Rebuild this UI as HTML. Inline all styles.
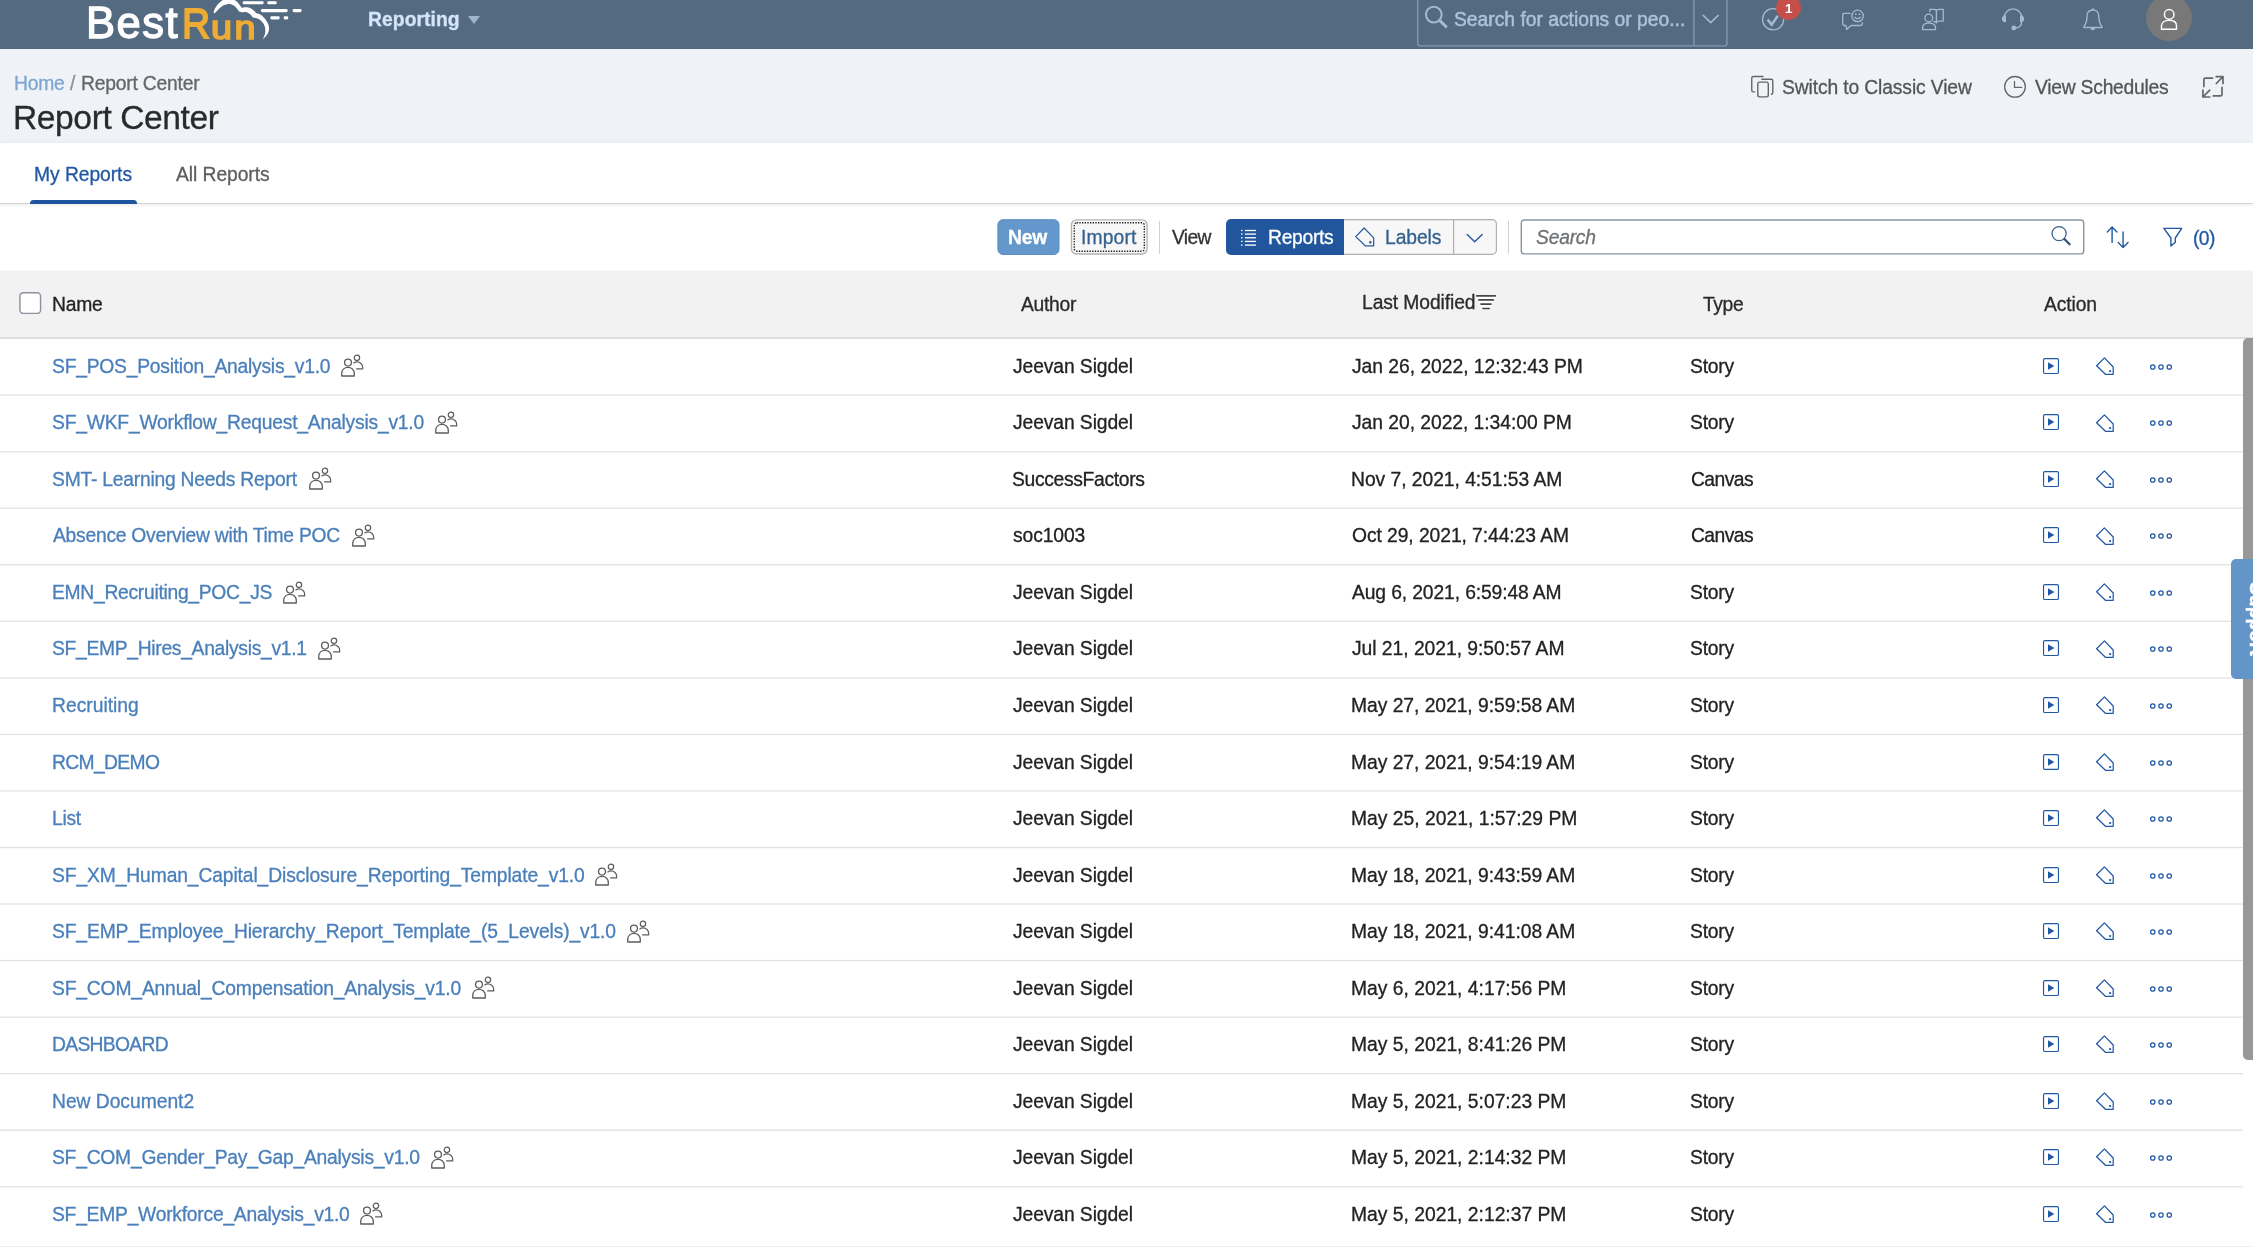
<!DOCTYPE html>
<html lang="en"><head><meta charset="utf-8"><title>Report Center</title>
<style>
*{box-sizing:border-box}
html,body{margin:0;padding:0}
body{width:2253px;height:1247px;overflow:hidden;position:relative;background:#fff;font-family:'Liberation Sans',sans-serif;font-size:19.3px;color:#222}
header,section,nav,div,aside,a,h1,span,button,i{position:absolute;display:block}
.t{white-space:pre;line-height:1;will-change:transform;-webkit-text-stroke:.3px currentColor}
.ico{position:absolute;overflow:visible;display:block}
a{text-decoration:none}
button{margin:0;padding:0;font:inherit;border:0;background:none}
h1{margin:0;font-weight:400;font-size:inherit}
.shell{background:linear-gradient(to bottom,#536a80 0 49px,#8495a6 49px 50px);overflow:hidden}
.badge{border-radius:50%;background:#c5504a}
.avatar{border-radius:50%;background:#787878}
.pagehead{background:#eff3f8}
.tabs{background:#fff;box-shadow:inset 0 -1px 0 #d3d3d3,0 1px 4px rgba(0,0,0,.09)}
.ul{background:#1f559e;border-radius:3.5px 3.5px 0 0}
.btn{border-radius:5px}
.sep{background:#d0d0d0}
.rep{background:#22569c;border-radius:5px 0 0 5px}
.lab{background:#f7f7f7;box-shadow:inset 0 1.2px 0 #b0b0b0,inset 0 -1.2px 0 #b0b0b0}
.chev{background:#f7f7f7;box-shadow:inset 0 0 0 1.2px #b0b0b0;border-radius:0 5px 5px 0}
.search{}
.theadtop{background:#fafafa}
.thead{background:#f2f2f2;border-bottom:2.2px solid #dedede}
.bottomline{background:#edf1f6}
.scroll{background:#989898;border-radius:5px 0 0 5px}
.support{background:#6495c9;border-radius:5px 0 0 5px;overflow:hidden}
.rot{transform-origin:0 0;transform:rotate(90deg)}
</style></head>
<body>
<header class="shell" style="left:0.00px;top:0.00px;width:2253.00px;height:50.00px;">
<a class="logo" style="left:80.00px;top:0.00px;width:230.00px;height:49.00px;">
<span id="t0" class="t" style="left:5.85px;top:2.00px;font-size:43.6px;color:#fff;letter-spacing:1.461px;-webkit-text-stroke:1.3px #fff;">Best</span><span id="t1" class="t run" style="left:101.51px;top:2.00px;font-size:43.4px;color:#eeac34;transform-origin:0 0;transform:scaleX(0.8963);-webkit-text-stroke:1.9px #eeac34;">R</span><span id="t2" class="t run" style="left:131.18px;top:12.00px;font-size:32.6px;color:#eeac34;letter-spacing:2.192px;transform-origin:0 0;transform:scaleX(1.1600);-webkit-text-stroke:1.6px #eeac34;">un</span>
<svg class="ico" style="left:125.0px;top:-8.0px" width="100" height="52" viewBox="0 0 100 52"><path d="M8.60 21.20 C8.78 20.52 9.00 18.57 9.70 17.10 C10.40 15.63 11.67 13.75 12.80 12.40 C13.93 11.05 15.30 9.97 16.50 9.00 C17.70 8.03 18.82 7.13 20.00 6.60 C21.18 6.07 22.43 5.77 23.60 5.80 C24.77 5.83 26.05 6.43 27.00 6.80 C27.95 7.17 28.42 7.47 29.30 8.00 C30.18 8.53 31.35 9.10 32.30 10.00 C33.25 10.90 34.22 12.42 35.00 13.40 C35.78 14.38 36.67 15.48 37.00 15.90 C37.50 15.78 38.93 15.25 40.00 15.20 C41.07 15.15 42.27 15.28 43.40 15.60 C44.53 15.92 45.73 16.43 46.80 17.10 C47.87 17.77 49.07 18.90 49.80 19.60 C50.53 20.30 50.97 21.02 51.20 21.30 C51.70 21.43 53.13 21.62 54.20 22.10 C55.27 22.58 56.48 23.23 57.60 24.20 C58.72 25.17 59.95 26.55 60.90 27.90 C61.85 29.25 62.77 30.85 63.30 32.30 C63.83 33.75 64.10 35.27 64.10 36.60 C64.10 37.93 63.77 39.12 63.30 40.30 C62.83 41.48 62.25 42.50 61.30 43.70 C60.35 44.90 58.22 46.87 57.60 47.50 C57.93 46.75 59.15 44.37 59.60 43.00 C60.05 41.63 60.25 40.65 60.30 39.30 C60.35 37.95 60.25 36.25 59.90 34.90 C59.55 33.55 58.93 32.32 58.20 31.20 C57.47 30.08 56.57 29.03 55.50 28.20 C54.43 27.37 53.08 26.65 51.80 26.20 C50.52 25.75 48.47 25.62 47.80 25.50 C47.52 25.12 46.83 23.95 46.10 23.20 C45.37 22.45 44.42 21.53 43.40 21.00 C42.38 20.47 41.18 20.12 40.00 20.00 C38.82 19.88 37.30 20.37 36.30 20.30 C35.30 20.23 34.38 19.72 34.00 19.60 C33.72 19.18 32.98 18.00 32.30 17.10 C31.62 16.20 30.85 14.98 29.90 14.20 C28.95 13.42 27.72 12.78 26.60 12.40 C25.48 12.02 24.43 11.78 23.20 11.90 C21.97 12.02 20.43 12.55 19.20 13.10 C17.97 13.65 16.93 14.32 15.80 15.20 C14.67 16.08 13.42 17.42 12.40 18.40 C11.38 19.38 10.33 20.63 9.70 21.10 C9.07 21.57 8.78 21.18 8.60 21.20 Z" fill="#fff"/><g fill="#fff"><rect x="37.70" y="9.30" width="20.90" height="2.9" rx="1.25"/><rect x="62.30" y="9.30" width="9.40" height="2.9" rx="1.25"/><rect x="55.90" y="16.95" width="26.80" height="3.3" rx="1.45"/><rect x="87.60" y="16.95" width="9.00" height="3.3" rx="1.45"/><rect x="65.30" y="24.35" width="9.40" height="3.1" rx="1.35"/><rect x="78.60" y="24.35" width="4.70" height="3.1" rx="1.35"/></g></svg>
</a>
<nav class="menu" style="left:360.00px;top:0.00px;width:130.00px;height:49.00px;">
<span id="t3" class="t" style="left:8.20px;top:10.00px;font-weight:700;color:#d3e5f8;letter-spacing:0.067px;">Reporting</span>
<svg class="ico" style="left:107.0px;top:15.0px" width="14" height="10" viewBox="0 0 14 10"><path d="M1 1 L13 1 L7 9 Z" fill="#9fb5cb"/></svg>
</nav>
<div class="hsearch" style="left:1417.00px;top:0.00px;width:311.00px;height:48.00px;">
<svg class="ico" style="left:-2.0px;top:0.0px" width="316" height="50" viewBox="0 0 316 50"><path d="M2.7 -2 L2.7 43.2 Q2.7 45.9 5.4 45.9 L309.3 45.9 Q312 45.9 312 43.2 L312 -2 M278.9 -2 L278.9 45.9" fill="none" stroke="#7f9ab4" stroke-width="1.4"/></svg>
<svg class="ico" style="left:6.0px;top:4.0px" width="26" height="26" viewBox="0 0 26 26"><circle cx="10.8" cy="10.6" r="7.85" fill="none" stroke="#a3bad2" stroke-width="2.05"/><path d="M16.6 16.4 L22.9 22.5" stroke="#a3bad2" stroke-width="3.1" stroke-linecap="round"/></svg>
<span id="t4" class="t" style="left:37.10px;top:10.00px;color:#aac2d9;letter-spacing:-0.009px;-webkit-text-stroke:.5px #aac2d9;">Search for actions or peo...</span>
<svg class="ico" style="left:283.0px;top:12.0px" width="22" height="14" viewBox="0 0 22 14"><path d="M3.2 3.4 L10.7 10.6 L18.2 3.4" fill="none" stroke="#a3bad2" stroke-width="1.5" stroke-linecap="round" stroke-linejoin="round"/></svg>
</div>
<svg class="ico" style="left:1760.0px;top:6.0px" width="27" height="27" viewBox="0 0 27 27"><circle cx="13.1" cy="13.3" r="10.6" fill="none" stroke="#a3bad2" stroke-width="1.3"/><path d="M7.6 13.6 L11.7 18.6 L17.8 9.8" fill="none" stroke="#a3bad2" stroke-width="2.5" stroke-linejoin="miter"/></svg>
<span class="badge" style="left:1775.70px;top:-4.70px;width:25.00px;height:25.00px;">
<span id="t5" class="t" style="left:9.30px;top:6.70px;font-size:13.4px;font-weight:700;color:#fff;-webkit-text-stroke:0;">1</span>
</span>
<svg class="ico" style="left:1840.0px;top:6.0px" width="27" height="27" viewBox="0 0 27 27"><g fill="none" stroke="#a3bad2" stroke-width="1.3" stroke-linecap="round" stroke-linejoin="round"><path d="M10.2 7.3 L4.4 7.3 Q2.7 7.3 2.7 9 L2.7 17.8 Q2.7 19.5 4.4 19.5 L6 19.5 L6.6 23.4 L10.8 19.5 L20.6 19.5 Q22.3 19.5 22.3 17.8 L22.3 16.6"/><circle cx="17.6" cy="9.9" r="5.7"/><path d="M14.9 11.2 Q17.6 14 20.3 11.2"/></g><circle cx="15.7" cy="8.2" r="0.9" fill="#a3bad2"/><circle cx="19.5" cy="8.2" r="0.9" fill="#a3bad2"/></svg>
<svg class="ico" style="left:1920.0px;top:6.0px" width="27" height="27" viewBox="0 0 27 27"><g fill="none" stroke="#a3bad2" stroke-width="1.3" stroke-linejoin="round" stroke-linecap="round"><circle cx="8.8" cy="11.9" r="3.85"/><path d="M2.6 23.6 L2.6 21.6 C2.6 18.6 5.3 17.1 8.8 17.1 C12.3 17.1 15.5 18.6 15.5 21.6 L15.5 23.6 Z"/><path d="M9.9 5.6 L9.9 3.3 L14.2 3.3 Q16.4 3.3 16.4 5.5 L16.4 15.2 M16.4 5.5 Q16.4 3.3 18.6 3.3 L23.2 3.3 L23.2 15.2 L19 15.2 Q16.4 15.2 16.4 17 Q15.4 15.4 13.6 15.3"/></g></svg>
<svg class="ico" style="left:2000.0px;top:6.0px" width="27" height="27" viewBox="0 0 27 27"><g fill="none" stroke="#a3bad2" stroke-width="1.3" stroke-linecap="round"><path d="M4 12.5 A9 9.6 0 0 1 22 12.5"/><path d="M21.6 16 C21.6 19.5 19 21.6 15.6 22"/></g><path d="M6 9.4 L6 16.2 L4.6 16.2 Q1.9 15.6 1.9 12.8 Q1.9 10 4.6 9.4 Z" fill="#a3bad2"/><path d="M20 9.4 L20 16.2 L21.4 16.2 Q24.2 15.6 24.2 12.8 Q24.2 10 21.4 9.4 Z" fill="#a3bad2"/><circle cx="13.8" cy="22" r="2.4" fill="#a3bad2"/></svg>
<svg class="ico" style="left:2080.0px;top:6.0px" width="27" height="27" viewBox="0 0 27 27"><g fill="none" stroke="#a3bad2" stroke-width="1.3" stroke-linejoin="round"><path d="M12.9 4 C8.8 4 7 7 7 10.4 C7 15 6.2 17.6 3.8 20.6 Q3.4 21.5 4.3 21.5 L21.5 21.5 Q22.4 21.5 22 20.6 C19.6 17.6 18.8 15 18.8 10.4 C18.8 7 17 4 12.9 4 Z"/></g><circle cx="12.9" cy="3.3" r="1" fill="#a3bad2"/><path d="M10.6 22 A2.3 2.3 0 0 0 15.2 22 Z" fill="#a3bad2"/></svg>
<span class="avatar" style="left:2145.50px;top:-5.50px;width:46.80px;height:46.80px;">
<svg class="ico" style="left:9.5px;top:11.5px" width="28" height="27" viewBox="0 0 28 27"><g fill="none" stroke="#fff" stroke-width="1.45" stroke-linejoin="round"><circle cx="14.2" cy="8.4" r="4.8"/><path d="M6.5 23.3 L6.5 19.8 C6.5 16.3 10 14.3 14.2 14.3 C18.4 14.3 21.5 16.3 21.5 19.8 L21.5 23.3 Z"/></g></svg>
</span>
</header>
<section class="pagehead" style="left:0.00px;top:49.00px;width:2253.00px;height:94.00px;">
<nav class="crumbs" style="left:0.00px;top:21.00px;width:400.00px;height:26.00px;">
<span id="t6" class="t" style="left:13.60px;top:4.00px;color:#7ea6d0;letter-spacing:-0.236px;">Home</span>
<span id="t7" class="t" style="left:70.30px;top:4.00px;color:#8a8f96;">/</span>
<span id="t8" class="t" style="left:80.80px;top:4.00px;color:#666;letter-spacing:-0.207px;">Report Center</span>
</nav>
<h1 class="title" style="left:0.00px;top:49.00px;width:400.00px;height:40.00px;">
<span id="t9" class="t" style="left:13.20px;top:3.00px;font-size:33.6px;color:#2a2a2a;letter-spacing:-0.410px;">Report Center</span>
</h1>
<div class="actions" style="left:1740.00px;top:21.00px;width:500.00px;height:34.00px;">
<svg class="ico" style="left:9.0px;top:4.0px" width="27" height="27" viewBox="0 0 27 27"><g fill="none" stroke="#666" stroke-width="1.4" stroke-linecap="round" stroke-linejoin="round"><path d="M14 2.5 L4.4 2.5 Q2.75 2.5 2.75 4.2 L2.75 16.2 Q2.75 17.9 4.4 17.9 L5.6 17.9"/><path d="M12.8 5.3 L22.1 5.3 Q23.8 5.3 23.8 7 L23.8 18.6 Q23.8 20.1 22.4 20.2"/><rect x="8.8" y="8.1" width="10.5" height="14.8" rx="1.8"/></g></svg>
<span id="t10" class="t" style="left:41.50px;top:8.00px;color:#555;letter-spacing:-0.128px;">Switch to Classic View</span>
<svg class="ico" style="left:262.0px;top:4.0px" width="27" height="27" viewBox="0 0 27 27"><g fill="none" stroke="#666" stroke-width="1.3" stroke-linecap="round" stroke-linejoin="round"><circle cx="13" cy="12.85" r="10.35"/><path d="M12.5 7.4 L12.5 13.4 L19.7 13.4"/></g></svg>
<span id="t11" class="t" style="left:295.20px;top:8.00px;color:#555;letter-spacing:-0.239px;">View Schedules</span>
<svg class="ico" style="left:460.0px;top:4.0px" width="27" height="27" viewBox="0 0 27 27"><g fill="none" stroke="#666" stroke-width="1.7" stroke-linecap="round" stroke-linejoin="round"><path d="M12.6 4.1 L5.4 4.1 Q3.9 4.1 3.9 5.6 L3.9 12.6"/><path d="M16.2 2.7 L23 2.7 L23 9.6 M23 2.7 L16.3 9.5"/><path d="M22 13.3 L22 20.4 Q22 21.9 20.5 21.9 L13.3 21.9"/><path d="M2.9 16 L2.9 23 L9.8 23 M2.9 23 L9.7 16.1"/></g></svg>
</div>
</section>
<nav class="tabs" style="left:0.00px;top:143.00px;width:2253.00px;height:61.00px;">
<a class="tab sel" style="left:30.40px;top:0.00px;width:106.20px;height:61.40px;">
<span id="t12" class="t" style="left:3.80px;top:22.00px;color:#2257a3;letter-spacing:-0.059px;">My Reports</span>
<i class="ul" style="left:0.00px;top:57.00px;width:106.60px;height:4.00px;"></i>
</a>
<a class="tab" style="left:170.00px;top:0.00px;width:106.00px;height:61.40px;">
<span id="t13" class="t" style="left:6.40px;top:22.00px;color:#5f5f5f;letter-spacing:-0.066px;">All Reports</span>
</a>
</nav>
<div class="toolbar" style="left:0.00px;top:205.00px;width:2253.00px;height:65.40px;">
<button class="btn new" style="left:997.00px;top:14.00px;width:63.00px;height:36.00px;">
<svg class="ico bx" style="left:-1.00px;top:-1.00px" width="66" height="39" viewBox="0 0 66 39"><rect x="1.90" y="1.70" width="61.10" height="34.80" rx="5" fill="#6497cb" stroke="#5a8ec7" stroke-width="1.0"/></svg>
<span id="t14" class="t" style="left:10.90px;top:9.00px;font-weight:700;color:#fff;letter-spacing:-0.224px;">New</span>
</button>
<button class="btn imp" style="left:1070.00px;top:14.00px;width:78.00px;height:36.00px;">
<svg class="ico bx" style="left:-1.00px;top:-1.00px" width="80" height="39" viewBox="0 0 80 39"><rect x="2.47" y="1.87" width="75.55" height="34.15" rx="5" fill="#f7f7f7" stroke="#b2b2b2" stroke-width="1.35"/></svg>
<svg class="ico" style="left:0.0px;top:0.0px" width="80" height="38" viewBox="0 0 80 38"><rect x="4.26" y="3.76" width="70.07" height="28.47" rx="2.4" fill="none" stroke="#1c1c1c" stroke-width="1.33" stroke-dasharray="1.33 1.34"/></svg>
<span id="t15" class="t" style="left:11.40px;top:9.00px;color:#35628f;letter-spacing:0.143px;">Import</span>
</button>
<i class="sep" style="left:1159.00px;top:16.00px;width:1.20px;height:32.50px;"></i>
<span id="t16" class="t" style="left:1171.90px;top:23.00px;color:#333;letter-spacing:-0.673px;">View</span>
<div class="seg" style="left:1226.40px;top:14.20px;width:270.20px;height:35.80px;">
<button class="sg rep" style="left:0.00px;top:0.00px;width:117.40px;height:35.80px;">
<svg class="ico" style="left:13.6px;top:9.8px" width="18" height="18" viewBox="0 0 18 18"><g fill="#fff"><rect x="1" y="0.85" width="1.5" height="1.3"/><rect x="4.9" y="0.85" width="11" height="1.3"/><rect x="1" y="4.45" width="1.5" height="1.3"/><rect x="4.9" y="4.45" width="11" height="1.3"/><rect x="1" y="8.10" width="1.5" height="1.3"/><rect x="4.9" y="8.10" width="11" height="1.3"/><rect x="1" y="11.75" width="1.5" height="1.3"/><rect x="4.9" y="11.75" width="11" height="1.3"/><rect x="1" y="15.45" width="1.5" height="1.3"/><rect x="4.9" y="15.45" width="11" height="1.3"/></g></svg>
<span id="t17" class="t" style="left:41.80px;top:8.80px;color:#fff;letter-spacing:-0.295px;">Reports</span>
</button>
<button class="sg lab" style="left:117.40px;top:0.00px;width:110.40px;height:35.80px;">
<svg class="ico" style="left:10.1px;top:7.1px" width="21.6" height="21.6" viewBox="0 0 21.6 21.6"><g transform="scale(1.08)"><path d="M9.4 1.9 L1.6 9.8 L10.4 18.3 L18.2 18.3 L18.2 11 Z" fill="none" stroke="#2a5c9f" stroke-width="1.157" stroke-linejoin="round"/><circle cx="15.1" cy="15.1" r="1.15" fill="#2a5c9f"/></g></svg>
<span id="t18" class="t" style="left:40.80px;top:8.80px;color:#335f8f;letter-spacing:-0.075px;">Labels</span>
</button>
<button class="sg chev" style="left:226.60px;top:0.00px;width:43.60px;height:35.80px;">
<svg class="ico" style="left:11px;top:11.8px" width="22" height="14" viewBox="0 0 22 14"><path d="M3.2 3.6 L10.7 10.8 L18.2 3.6" fill="none" stroke="#2058a5" stroke-width="1.4" stroke-linecap="round" stroke-linejoin="round"/></svg>
</button>
</div>
<i class="sep" style="left:1508.00px;top:16.00px;width:1.20px;height:32.50px;"></i>
<div class="search" style="left:1520.60px;top:14.30px;width:563.80px;height:35.40px;">
<svg class="ico bx" style="left:-1.60px;top:-1.30px" width="567" height="39" viewBox="0 0 567 39"><rect x="2.30" y="2.00" width="562.40" height="33.90" rx="3" fill="#fff" stroke="#8a95a1" stroke-width="1.4"/></svg>
<span id="t19" class="t" style="left:15.40px;top:8.70px;font-style:italic;color:#6f7275;letter-spacing:-0.214px;">Search</span>
<svg class="ico" style="left:528.4px;top:4.7px" width="24" height="24" viewBox="0 0 24 24"><circle cx="10.1" cy="9.6" r="7.1" fill="none" stroke="#3b5f86" stroke-width="1.25"/><path d="M15.4 15 L20.6 20.3" stroke="#2f5379" stroke-width="2.3" stroke-linecap="round"/></svg>
</div>
<svg class="ico" style="left:2104.0px;top:19.0px" width="27" height="27" viewBox="0 0 27 27"><g fill="none" stroke="#2058a5" stroke-width="1.4" stroke-linecap="round" stroke-linejoin="round"><path d="M8.1 18.4 L8.1 2.9 M3.3 7.9 L8.1 2.9 L12.9 7.9"/><path d="M19.1 8 L19.1 23.5 M14.2 18.6 L19.1 23.5 L24 18.6"/></g></svg>
<svg class="ico" style="left:2160.0px;top:19.0px" width="25" height="25" viewBox="0 0 25 25"><path d="M3.9 4.4 L21.7 4.4 L15.3 14 L15.3 18.3 L10.9 22 L10.9 14 Z" fill="none" stroke="#2058a5" stroke-width="1.4" stroke-linejoin="round"/></svg>
<span id="t20" class="t" style="left:2192.80px;top:24.00px;color:#2058a5;letter-spacing:-0.572px;">(0)</span>
</div>
<div class="table" style="left:0.00px;top:270.00px;width:2253.00px;height:977.00px;">
<i class="theadtop" style="left:0.00px;top:0.00px;width:2253.00px;height:1.00px;"></i>
<div class="thead" style="left:0.00px;top:1.00px;width:2253.00px;height:68.20px;">
<svg class="ico cb" style="left:18.00px;top:20.00px" width="26" height="26" viewBox="0 0 26 26"><rect x="1.92" y="1.83" width="20.65" height="20.55" rx="3.4" fill="#fff" stroke="#8b949e" stroke-width="1.45"/></svg>
<span id="t21" class="t" style="left:52.30px;top:24.00px;color:#222;letter-spacing:-0.203px;">Name</span>
<span id="t22" class="t" style="left:1020.80px;top:24.00px;color:#2a2a2a;letter-spacing:-0.297px;">Author</span>
<span id="t23" class="t" style="left:1362.00px;top:22.00px;color:#2a2a2a;letter-spacing:-0.096px;">Last Modified</span>
<svg class="ico" style="left:1474.0px;top:22.0px" width="24" height="18" viewBox="0 0 24 18"><path d="M2.3 3 L21.8 3 L16.2 15.2 L7.9 15.2 Z" fill="#fff"/><g fill="#454545"><rect x="1.90" y="1.93" width="20.30" height="1.85" rx="0.93"/><rect x="4.10" y="6.07" width="16.00" height="1.75" rx="0.88"/><rect x="6.10" y="10.28" width="11.80" height="1.65" rx="0.82"/><rect x="8.10" y="14.65" width="7.90" height="1.5" rx="0.75"/></g></svg>
<span id="t24" class="t" style="left:1703.30px;top:24.00px;color:#2a2a2a;letter-spacing:-0.392px;">Type</span>
<span id="t25" class="t" style="left:2044.30px;top:24.00px;color:#2a2a2a;letter-spacing:-0.113px;">Action</span>
</div>
<div class="row" style="left:0.00px;top:69.20px;width:2243.30px;height:56.53px;">
<span id="t26" class="t lnk" style="left:52.00px;top:17.80px;color:#4a7fba;letter-spacing:-0.234px;">SF_POS_Position_Analysis_v1.0</span>
<svg class="ico" style="left:341.1px;top:15.2px" width="23" height="23" viewBox="0 0 23 23"><g fill="none" stroke="#5c5c5c" stroke-width="1.3" stroke-linecap="round" stroke-linejoin="round"><circle cx="7" cy="8.6" r="3.45"/><path d="M0.75 22 L0.75 19.6 C0.75 15.6 3.6 13.4 7 13.4 C10.4 13.4 13.3 15.6 13.3 19.6 L13.3 22 Z"/><circle cx="15.95" cy="3.85" r="2.7" stroke-width="1.2"/><path stroke-width="1.2" d="M12.8 8.9 C13.8 8.2 14.8 7.85 15.95 7.85 C19.2 7.85 21.7 10.3 21.7 13.4 L21.7 14.9 L15.6 14.9"/></g></svg>
<span id="t27" class="t" style="left:1013.30px;top:17.80px;color:#222;letter-spacing:-0.095px;">Jeevan Sigdel</span>
<span id="t28" class="t" style="left:1352.20px;top:17.80px;color:#222;letter-spacing:-0.028px;">Jan 26, 2022, 12:32:43 PM</span>
<span id="t29" class="t" style="left:1689.60px;top:17.80px;color:#222;letter-spacing:-0.190px;">Story</span>
<svg class="ico" style="left:2041.8px;top:17.6px" width="18" height="18" viewBox="0 0 18 18"><rect x="1.55" y="1.55" width="14.9" height="14.9" rx="1.3" fill="none" stroke="#2058a5" stroke-width="1.15"/><path d="M6 5.3 L12.3 9 L6 12.7 Z" fill="#2058a5"/></svg>
<svg class="ico" style="left:2094.9px;top:16.8px" width="20.0" height="20.0" viewBox="0 0 20.0 20.0"><g transform="scale(1.0)"><path d="M9.4 1.9 L1.6 9.8 L10.4 18.3 L18.2 18.3 L18.2 11 Z" fill="none" stroke="#2058a5" stroke-width="1.250" stroke-linejoin="round"/><circle cx="15.1" cy="15.1" r="1.15" fill="#2058a5"/></g></svg>
<svg class="ico" style="left:2148.0px;top:23.6px" width="26" height="8" viewBox="0 0 26 8"><circle cx="4.75" cy="4" r="2.2" fill="none" stroke="#2058a5" stroke-width="1.25"/><circle cx="13" cy="4" r="2.2" fill="none" stroke="#2058a5" stroke-width="1.25"/><circle cx="21.25" cy="4" r="2.2" fill="none" stroke="#2058a5" stroke-width="1.25"/></svg>
<i class="hr" style="left:0.00px;top:54.80px;width:2243.30px;height:2.00px;background:linear-gradient(to bottom,#efefef 0px 1px,#eaeaea 1px 2px);"></i>
</div>
<div class="row" style="left:0.00px;top:125.73px;width:2243.30px;height:56.53px;">
<span id="t30" class="t lnk" style="left:52.00px;top:17.27px;color:#4a7fba;letter-spacing:-0.218px;">SF_WKF_Workflow_Request_Analysis_v1.0</span>
<svg class="ico" style="left:434.8px;top:15.2px" width="23" height="23" viewBox="0 0 23 23"><g fill="none" stroke="#5c5c5c" stroke-width="1.3" stroke-linecap="round" stroke-linejoin="round"><circle cx="7" cy="8.6" r="3.45"/><path d="M0.75 22 L0.75 19.6 C0.75 15.6 3.6 13.4 7 13.4 C10.4 13.4 13.3 15.6 13.3 19.6 L13.3 22 Z"/><circle cx="15.95" cy="3.85" r="2.7" stroke-width="1.2"/><path stroke-width="1.2" d="M12.8 8.9 C13.8 8.2 14.8 7.85 15.95 7.85 C19.2 7.85 21.7 10.3 21.7 13.4 L21.7 14.9 L15.6 14.9"/></g></svg>
<span id="t31" class="t" style="left:1013.30px;top:17.27px;color:#222;letter-spacing:-0.095px;">Jeevan Sigdel</span>
<span id="t32" class="t" style="left:1352.20px;top:17.27px;color:#222;letter-spacing:-0.042px;">Jan 20, 2022, 1:34:00 PM</span>
<span id="t33" class="t" style="left:1689.60px;top:17.27px;color:#222;letter-spacing:-0.190px;">Story</span>
<svg class="ico" style="left:2041.8px;top:17.6px" width="18" height="18" viewBox="0 0 18 18"><rect x="1.55" y="1.55" width="14.9" height="14.9" rx="1.3" fill="none" stroke="#2058a5" stroke-width="1.15"/><path d="M6 5.3 L12.3 9 L6 12.7 Z" fill="#2058a5"/></svg>
<svg class="ico" style="left:2094.9px;top:16.8px" width="20.0" height="20.0" viewBox="0 0 20.0 20.0"><g transform="scale(1.0)"><path d="M9.4 1.9 L1.6 9.8 L10.4 18.3 L18.2 18.3 L18.2 11 Z" fill="none" stroke="#2058a5" stroke-width="1.250" stroke-linejoin="round"/><circle cx="15.1" cy="15.1" r="1.15" fill="#2058a5"/></g></svg>
<svg class="ico" style="left:2148.0px;top:23.6px" width="26" height="8" viewBox="0 0 26 8"><circle cx="4.75" cy="4" r="2.2" fill="none" stroke="#2058a5" stroke-width="1.25"/><circle cx="13" cy="4" r="2.2" fill="none" stroke="#2058a5" stroke-width="1.25"/><circle cx="21.25" cy="4" r="2.2" fill="none" stroke="#2058a5" stroke-width="1.25"/></svg>
<i class="hr" style="left:0.00px;top:54.27px;width:2243.30px;height:3.00px;background:linear-gradient(to bottom,#ffffff 0px 1px,#e3e3e3 1px 2px,#f6f6f6 2px 3px);"></i>
</div>
<div class="row" style="left:0.00px;top:182.26px;width:2243.30px;height:56.53px;">
<span id="t34" class="t lnk" style="left:52.00px;top:17.74px;color:#4a7fba;letter-spacing:-0.229px;">SMT- Learning Needs Report</span>
<svg class="ico" style="left:309.0px;top:15.2px" width="23" height="23" viewBox="0 0 23 23"><g fill="none" stroke="#5c5c5c" stroke-width="1.3" stroke-linecap="round" stroke-linejoin="round"><circle cx="7" cy="8.6" r="3.45"/><path d="M0.75 22 L0.75 19.6 C0.75 15.6 3.6 13.4 7 13.4 C10.4 13.4 13.3 15.6 13.3 19.6 L13.3 22 Z"/><circle cx="15.95" cy="3.85" r="2.7" stroke-width="1.2"/><path stroke-width="1.2" d="M12.8 8.9 C13.8 8.2 14.8 7.85 15.95 7.85 C19.2 7.85 21.7 10.3 21.7 13.4 L21.7 14.9 L15.6 14.9"/></g></svg>
<span id="t35" class="t" style="left:1012.30px;top:17.74px;color:#222;letter-spacing:-0.324px;">SuccessFactors</span>
<span id="t36" class="t" style="left:1351.20px;top:17.74px;color:#222;letter-spacing:-0.043px;">Nov 7, 2021, 4:51:53 AM</span>
<span id="t37" class="t" style="left:1690.60px;top:17.74px;color:#222;letter-spacing:-0.567px;">Canvas</span>
<svg class="ico" style="left:2041.8px;top:17.6px" width="18" height="18" viewBox="0 0 18 18"><rect x="1.55" y="1.55" width="14.9" height="14.9" rx="1.3" fill="none" stroke="#2058a5" stroke-width="1.15"/><path d="M6 5.3 L12.3 9 L6 12.7 Z" fill="#2058a5"/></svg>
<svg class="ico" style="left:2094.9px;top:16.8px" width="20.0" height="20.0" viewBox="0 0 20.0 20.0"><g transform="scale(1.0)"><path d="M9.4 1.9 L1.6 9.8 L10.4 18.3 L18.2 18.3 L18.2 11 Z" fill="none" stroke="#2058a5" stroke-width="1.250" stroke-linejoin="round"/><circle cx="15.1" cy="15.1" r="1.15" fill="#2058a5"/></g></svg>
<svg class="ico" style="left:2148.0px;top:23.6px" width="26" height="8" viewBox="0 0 26 8"><circle cx="4.75" cy="4" r="2.2" fill="none" stroke="#2058a5" stroke-width="1.25"/><circle cx="13" cy="4" r="2.2" fill="none" stroke="#2058a5" stroke-width="1.25"/><circle cx="21.25" cy="4" r="2.2" fill="none" stroke="#2058a5" stroke-width="1.25"/></svg>
<i class="hr" style="left:0.00px;top:54.74px;width:2243.30px;height:2.00px;background:linear-gradient(to bottom,#f2f2f2 0px 1px,#e7e7e7 1px 2px);"></i>
</div>
<div class="row" style="left:0.00px;top:238.79px;width:2243.30px;height:56.53px;">
<span id="t38" class="t lnk" style="left:53.00px;top:17.21px;color:#4a7fba;letter-spacing:-0.258px;">Absence Overview with Time POC</span>
<svg class="ico" style="left:351.9px;top:15.2px" width="23" height="23" viewBox="0 0 23 23"><g fill="none" stroke="#5c5c5c" stroke-width="1.3" stroke-linecap="round" stroke-linejoin="round"><circle cx="7" cy="8.6" r="3.45"/><path d="M0.75 22 L0.75 19.6 C0.75 15.6 3.6 13.4 7 13.4 C10.4 13.4 13.3 15.6 13.3 19.6 L13.3 22 Z"/><circle cx="15.95" cy="3.85" r="2.7" stroke-width="1.2"/><path stroke-width="1.2" d="M12.8 8.9 C13.8 8.2 14.8 7.85 15.95 7.85 C19.2 7.85 21.7 10.3 21.7 13.4 L21.7 14.9 L15.6 14.9"/></g></svg>
<span id="t39" class="t" style="left:1013.30px;top:17.21px;color:#222;letter-spacing:-0.112px;">soc1003</span>
<span id="t40" class="t" style="left:1352.20px;top:17.21px;color:#222;letter-spacing:-0.073px;">Oct 29, 2021, 7:44:23 AM</span>
<span id="t41" class="t" style="left:1690.60px;top:17.21px;color:#222;letter-spacing:-0.567px;">Canvas</span>
<svg class="ico" style="left:2041.8px;top:17.6px" width="18" height="18" viewBox="0 0 18 18"><rect x="1.55" y="1.55" width="14.9" height="14.9" rx="1.3" fill="none" stroke="#2058a5" stroke-width="1.15"/><path d="M6 5.3 L12.3 9 L6 12.7 Z" fill="#2058a5"/></svg>
<svg class="ico" style="left:2094.9px;top:16.8px" width="20.0" height="20.0" viewBox="0 0 20.0 20.0"><g transform="scale(1.0)"><path d="M9.4 1.9 L1.6 9.8 L10.4 18.3 L18.2 18.3 L18.2 11 Z" fill="none" stroke="#2058a5" stroke-width="1.250" stroke-linejoin="round"/><circle cx="15.1" cy="15.1" r="1.15" fill="#2058a5"/></g></svg>
<svg class="ico" style="left:2148.0px;top:23.6px" width="26" height="8" viewBox="0 0 26 8"><circle cx="4.75" cy="4" r="2.2" fill="none" stroke="#2058a5" stroke-width="1.25"/><circle cx="13" cy="4" r="2.2" fill="none" stroke="#2058a5" stroke-width="1.25"/><circle cx="21.25" cy="4" r="2.2" fill="none" stroke="#2058a5" stroke-width="1.25"/></svg>
<i class="hr" style="left:0.00px;top:55.21px;width:2243.30px;height:2.00px;background:linear-gradient(to bottom,#e5e5e5 0px 1px,#f3f3f3 1px 2px);"></i>
</div>
<div class="row" style="left:0.00px;top:295.32px;width:2243.30px;height:56.53px;">
<span id="t42" class="t lnk" style="left:52.00px;top:17.68px;color:#4a7fba;letter-spacing:-0.287px;">EMN_Recruiting_POC_JS</span>
<svg class="ico" style="left:282.8px;top:15.2px" width="23" height="23" viewBox="0 0 23 23"><g fill="none" stroke="#5c5c5c" stroke-width="1.3" stroke-linecap="round" stroke-linejoin="round"><circle cx="7" cy="8.6" r="3.45"/><path d="M0.75 22 L0.75 19.6 C0.75 15.6 3.6 13.4 7 13.4 C10.4 13.4 13.3 15.6 13.3 19.6 L13.3 22 Z"/><circle cx="15.95" cy="3.85" r="2.7" stroke-width="1.2"/><path stroke-width="1.2" d="M12.8 8.9 C13.8 8.2 14.8 7.85 15.95 7.85 C19.2 7.85 21.7 10.3 21.7 13.4 L21.7 14.9 L15.6 14.9"/></g></svg>
<span id="t43" class="t" style="left:1013.30px;top:17.68px;color:#222;letter-spacing:-0.095px;">Jeevan Sigdel</span>
<span id="t44" class="t" style="left:1352.20px;top:17.68px;color:#222;letter-spacing:-0.121px;">Aug 6, 2021, 6:59:48 AM</span>
<span id="t45" class="t" style="left:1689.60px;top:17.68px;color:#222;letter-spacing:-0.190px;">Story</span>
<svg class="ico" style="left:2041.8px;top:17.6px" width="18" height="18" viewBox="0 0 18 18"><rect x="1.55" y="1.55" width="14.9" height="14.9" rx="1.3" fill="none" stroke="#2058a5" stroke-width="1.15"/><path d="M6 5.3 L12.3 9 L6 12.7 Z" fill="#2058a5"/></svg>
<svg class="ico" style="left:2094.9px;top:16.8px" width="20.0" height="20.0" viewBox="0 0 20.0 20.0"><g transform="scale(1.0)"><path d="M9.4 1.9 L1.6 9.8 L10.4 18.3 L18.2 18.3 L18.2 11 Z" fill="none" stroke="#2058a5" stroke-width="1.250" stroke-linejoin="round"/><circle cx="15.1" cy="15.1" r="1.15" fill="#2058a5"/></g></svg>
<svg class="ico" style="left:2148.0px;top:23.6px" width="26" height="8" viewBox="0 0 26 8"><circle cx="4.75" cy="4" r="2.2" fill="none" stroke="#2058a5" stroke-width="1.25"/><circle cx="13" cy="4" r="2.2" fill="none" stroke="#2058a5" stroke-width="1.25"/><circle cx="21.25" cy="4" r="2.2" fill="none" stroke="#2058a5" stroke-width="1.25"/></svg>
<i class="hr" style="left:0.00px;top:54.68px;width:2243.30px;height:2.00px;background:linear-gradient(to bottom,#f5f5f5 0px 1px,#e4e4e4 1px 2px);"></i>
</div>
<div class="row" style="left:0.00px;top:351.85px;width:2243.30px;height:56.53px;">
<span id="t46" class="t lnk" style="left:52.00px;top:17.15px;color:#4a7fba;letter-spacing:-0.305px;">SF_EMP_Hires_Analysis_v1.1</span>
<svg class="ico" style="left:317.5px;top:15.2px" width="23" height="23" viewBox="0 0 23 23"><g fill="none" stroke="#5c5c5c" stroke-width="1.3" stroke-linecap="round" stroke-linejoin="round"><circle cx="7" cy="8.6" r="3.45"/><path d="M0.75 22 L0.75 19.6 C0.75 15.6 3.6 13.4 7 13.4 C10.4 13.4 13.3 15.6 13.3 19.6 L13.3 22 Z"/><circle cx="15.95" cy="3.85" r="2.7" stroke-width="1.2"/><path stroke-width="1.2" d="M12.8 8.9 C13.8 8.2 14.8 7.85 15.95 7.85 C19.2 7.85 21.7 10.3 21.7 13.4 L21.7 14.9 L15.6 14.9"/></g></svg>
<span id="t47" class="t" style="left:1013.30px;top:17.15px;color:#222;letter-spacing:-0.095px;">Jeevan Sigdel</span>
<span id="t48" class="t" style="left:1352.20px;top:17.15px;color:#222;letter-spacing:-0.036px;">Jul 21, 2021, 9:50:57 AM</span>
<span id="t49" class="t" style="left:1689.60px;top:17.15px;color:#222;letter-spacing:-0.190px;">Story</span>
<svg class="ico" style="left:2041.8px;top:17.6px" width="18" height="18" viewBox="0 0 18 18"><rect x="1.55" y="1.55" width="14.9" height="14.9" rx="1.3" fill="none" stroke="#2058a5" stroke-width="1.15"/><path d="M6 5.3 L12.3 9 L6 12.7 Z" fill="#2058a5"/></svg>
<svg class="ico" style="left:2094.9px;top:16.8px" width="20.0" height="20.0" viewBox="0 0 20.0 20.0"><g transform="scale(1.0)"><path d="M9.4 1.9 L1.6 9.8 L10.4 18.3 L18.2 18.3 L18.2 11 Z" fill="none" stroke="#2058a5" stroke-width="1.250" stroke-linejoin="round"/><circle cx="15.1" cy="15.1" r="1.15" fill="#2058a5"/></g></svg>
<svg class="ico" style="left:2148.0px;top:23.6px" width="26" height="8" viewBox="0 0 26 8"><circle cx="4.75" cy="4" r="2.2" fill="none" stroke="#2058a5" stroke-width="1.25"/><circle cx="13" cy="4" r="2.2" fill="none" stroke="#2058a5" stroke-width="1.25"/><circle cx="21.25" cy="4" r="2.2" fill="none" stroke="#2058a5" stroke-width="1.25"/></svg>
<i class="hr" style="left:0.00px;top:55.15px;width:2243.30px;height:2.00px;background:linear-gradient(to bottom,#e8e8e8 0px 1px,#f1f1f1 1px 2px);"></i>
</div>
<div class="row" style="left:0.00px;top:408.38px;width:2243.30px;height:56.53px;">
<span id="t50" class="t lnk" style="left:52.00px;top:17.62px;color:#4a7fba;letter-spacing:-0.009px;">Recruiting</span>
<span id="t51" class="t" style="left:1013.30px;top:17.62px;color:#222;letter-spacing:-0.095px;">Jeevan Sigdel</span>
<span id="t52" class="t" style="left:1351.20px;top:17.62px;color:#222;letter-spacing:-0.039px;">May 27, 2021, 9:59:58 AM</span>
<span id="t53" class="t" style="left:1689.60px;top:17.62px;color:#222;letter-spacing:-0.190px;">Story</span>
<svg class="ico" style="left:2041.8px;top:17.6px" width="18" height="18" viewBox="0 0 18 18"><rect x="1.55" y="1.55" width="14.9" height="14.9" rx="1.3" fill="none" stroke="#2058a5" stroke-width="1.15"/><path d="M6 5.3 L12.3 9 L6 12.7 Z" fill="#2058a5"/></svg>
<svg class="ico" style="left:2094.9px;top:16.8px" width="20.0" height="20.0" viewBox="0 0 20.0 20.0"><g transform="scale(1.0)"><path d="M9.4 1.9 L1.6 9.8 L10.4 18.3 L18.2 18.3 L18.2 11 Z" fill="none" stroke="#2058a5" stroke-width="1.250" stroke-linejoin="round"/><circle cx="15.1" cy="15.1" r="1.15" fill="#2058a5"/></g></svg>
<svg class="ico" style="left:2148.0px;top:23.6px" width="26" height="8" viewBox="0 0 26 8"><circle cx="4.75" cy="4" r="2.2" fill="none" stroke="#2058a5" stroke-width="1.25"/><circle cx="13" cy="4" r="2.2" fill="none" stroke="#2058a5" stroke-width="1.25"/><circle cx="21.25" cy="4" r="2.2" fill="none" stroke="#2058a5" stroke-width="1.25"/></svg>
<i class="hr" style="left:0.00px;top:54.62px;width:2243.30px;height:3.00px;background:linear-gradient(to bottom,#f8f8f8 0px 1px,#e3e3e3 1px 2px,#fdfdfd 2px 3px);"></i>
</div>
<div class="row" style="left:0.00px;top:464.91px;width:2243.30px;height:56.53px;">
<span id="t54" class="t lnk" style="left:52.00px;top:18.09px;color:#4a7fba;letter-spacing:-0.654px;">RCM_DEMO</span>
<span id="t55" class="t" style="left:1013.30px;top:18.09px;color:#222;letter-spacing:-0.095px;">Jeevan Sigdel</span>
<span id="t56" class="t" style="left:1351.20px;top:18.09px;color:#222;letter-spacing:-0.039px;">May 27, 2021, 9:54:19 AM</span>
<span id="t57" class="t" style="left:1689.60px;top:18.09px;color:#222;letter-spacing:-0.190px;">Story</span>
<svg class="ico" style="left:2041.8px;top:17.6px" width="18" height="18" viewBox="0 0 18 18"><rect x="1.55" y="1.55" width="14.9" height="14.9" rx="1.3" fill="none" stroke="#2058a5" stroke-width="1.15"/><path d="M6 5.3 L12.3 9 L6 12.7 Z" fill="#2058a5"/></svg>
<svg class="ico" style="left:2094.9px;top:16.8px" width="20.0" height="20.0" viewBox="0 0 20.0 20.0"><g transform="scale(1.0)"><path d="M9.4 1.9 L1.6 9.8 L10.4 18.3 L18.2 18.3 L18.2 11 Z" fill="none" stroke="#2058a5" stroke-width="1.250" stroke-linejoin="round"/><circle cx="15.1" cy="15.1" r="1.15" fill="#2058a5"/></g></svg>
<svg class="ico" style="left:2148.0px;top:23.6px" width="26" height="8" viewBox="0 0 26 8"><circle cx="4.75" cy="4" r="2.2" fill="none" stroke="#2058a5" stroke-width="1.25"/><circle cx="13" cy="4" r="2.2" fill="none" stroke="#2058a5" stroke-width="1.25"/><circle cx="21.25" cy="4" r="2.2" fill="none" stroke="#2058a5" stroke-width="1.25"/></svg>
<i class="hr" style="left:0.00px;top:55.09px;width:2243.30px;height:2.00px;background:linear-gradient(to bottom,#ebebeb 0px 1px,#eeeeee 1px 2px);"></i>
</div>
<div class="row" style="left:0.00px;top:521.44px;width:2243.30px;height:56.53px;">
<span id="t58" class="t lnk" style="left:52.00px;top:17.56px;color:#4a7fba;letter-spacing:-0.283px;">List</span>
<span id="t59" class="t" style="left:1013.30px;top:17.56px;color:#222;letter-spacing:-0.095px;">Jeevan Sigdel</span>
<span id="t60" class="t" style="left:1351.20px;top:17.56px;color:#222;letter-spacing:0.009px;">May 25, 2021, 1:57:29 PM</span>
<span id="t61" class="t" style="left:1689.60px;top:17.56px;color:#222;letter-spacing:-0.190px;">Story</span>
<svg class="ico" style="left:2041.8px;top:17.6px" width="18" height="18" viewBox="0 0 18 18"><rect x="1.55" y="1.55" width="14.9" height="14.9" rx="1.3" fill="none" stroke="#2058a5" stroke-width="1.15"/><path d="M6 5.3 L12.3 9 L6 12.7 Z" fill="#2058a5"/></svg>
<svg class="ico" style="left:2094.9px;top:16.8px" width="20.0" height="20.0" viewBox="0 0 20.0 20.0"><g transform="scale(1.0)"><path d="M9.4 1.9 L1.6 9.8 L10.4 18.3 L18.2 18.3 L18.2 11 Z" fill="none" stroke="#2058a5" stroke-width="1.250" stroke-linejoin="round"/><circle cx="15.1" cy="15.1" r="1.15" fill="#2058a5"/></g></svg>
<svg class="ico" style="left:2148.0px;top:23.6px" width="26" height="8" viewBox="0 0 26 8"><circle cx="4.75" cy="4" r="2.2" fill="none" stroke="#2058a5" stroke-width="1.25"/><circle cx="13" cy="4" r="2.2" fill="none" stroke="#2058a5" stroke-width="1.25"/><circle cx="21.25" cy="4" r="2.2" fill="none" stroke="#2058a5" stroke-width="1.25"/></svg>
<i class="hr" style="left:0.00px;top:54.56px;width:2243.30px;height:3.00px;background:linear-gradient(to bottom,#fafafa 0px 1px,#e3e3e3 1px 2px,#fafafa 2px 3px);"></i>
</div>
<div class="row" style="left:0.00px;top:577.97px;width:2243.30px;height:56.53px;">
<span id="t62" class="t lnk" style="left:52.00px;top:18.03px;color:#4a7fba;letter-spacing:-0.120px;">SF_XM_Human_Capital_Disclosure_Reporting_Template_v1.0</span>
<svg class="ico" style="left:595.3px;top:15.2px" width="23" height="23" viewBox="0 0 23 23"><g fill="none" stroke="#5c5c5c" stroke-width="1.3" stroke-linecap="round" stroke-linejoin="round"><circle cx="7" cy="8.6" r="3.45"/><path d="M0.75 22 L0.75 19.6 C0.75 15.6 3.6 13.4 7 13.4 C10.4 13.4 13.3 15.6 13.3 19.6 L13.3 22 Z"/><circle cx="15.95" cy="3.85" r="2.7" stroke-width="1.2"/><path stroke-width="1.2" d="M12.8 8.9 C13.8 8.2 14.8 7.85 15.95 7.85 C19.2 7.85 21.7 10.3 21.7 13.4 L21.7 14.9 L15.6 14.9"/></g></svg>
<span id="t63" class="t" style="left:1013.30px;top:18.03px;color:#222;letter-spacing:-0.095px;">Jeevan Sigdel</span>
<span id="t64" class="t" style="left:1351.20px;top:18.03px;color:#222;letter-spacing:-0.039px;">May 18, 2021, 9:43:59 AM</span>
<span id="t65" class="t" style="left:1689.60px;top:18.03px;color:#222;letter-spacing:-0.190px;">Story</span>
<svg class="ico" style="left:2041.8px;top:17.6px" width="18" height="18" viewBox="0 0 18 18"><rect x="1.55" y="1.55" width="14.9" height="14.9" rx="1.3" fill="none" stroke="#2058a5" stroke-width="1.15"/><path d="M6 5.3 L12.3 9 L6 12.7 Z" fill="#2058a5"/></svg>
<svg class="ico" style="left:2094.9px;top:16.8px" width="20.0" height="20.0" viewBox="0 0 20.0 20.0"><g transform="scale(1.0)"><path d="M9.4 1.9 L1.6 9.8 L10.4 18.3 L18.2 18.3 L18.2 11 Z" fill="none" stroke="#2058a5" stroke-width="1.250" stroke-linejoin="round"/><circle cx="15.1" cy="15.1" r="1.15" fill="#2058a5"/></g></svg>
<svg class="ico" style="left:2148.0px;top:23.6px" width="26" height="8" viewBox="0 0 26 8"><circle cx="4.75" cy="4" r="2.2" fill="none" stroke="#2058a5" stroke-width="1.25"/><circle cx="13" cy="4" r="2.2" fill="none" stroke="#2058a5" stroke-width="1.25"/><circle cx="21.25" cy="4" r="2.2" fill="none" stroke="#2058a5" stroke-width="1.25"/></svg>
<i class="hr" style="left:0.00px;top:55.03px;width:2243.30px;height:2.00px;background:linear-gradient(to bottom,#eeeeee 0px 1px,#ebebeb 1px 2px);"></i>
</div>
<div class="row" style="left:0.00px;top:634.50px;width:2243.30px;height:56.53px;">
<span id="t66" class="t lnk" style="left:52.00px;top:17.50px;color:#4a7fba;letter-spacing:-0.148px;">SF_EMP_Employee_Hierarchy_Report_Template_(5_Levels)_v1.0</span>
<svg class="ico" style="left:626.6px;top:15.2px" width="23" height="23" viewBox="0 0 23 23"><g fill="none" stroke="#5c5c5c" stroke-width="1.3" stroke-linecap="round" stroke-linejoin="round"><circle cx="7" cy="8.6" r="3.45"/><path d="M0.75 22 L0.75 19.6 C0.75 15.6 3.6 13.4 7 13.4 C10.4 13.4 13.3 15.6 13.3 19.6 L13.3 22 Z"/><circle cx="15.95" cy="3.85" r="2.7" stroke-width="1.2"/><path stroke-width="1.2" d="M12.8 8.9 C13.8 8.2 14.8 7.85 15.95 7.85 C19.2 7.85 21.7 10.3 21.7 13.4 L21.7 14.9 L15.6 14.9"/></g></svg>
<span id="t67" class="t" style="left:1013.30px;top:17.50px;color:#222;letter-spacing:-0.095px;">Jeevan Sigdel</span>
<span id="t68" class="t" style="left:1351.20px;top:17.50px;color:#222;letter-spacing:-0.039px;">May 18, 2021, 9:41:08 AM</span>
<span id="t69" class="t" style="left:1689.60px;top:17.50px;color:#222;letter-spacing:-0.190px;">Story</span>
<svg class="ico" style="left:2041.8px;top:17.6px" width="18" height="18" viewBox="0 0 18 18"><rect x="1.55" y="1.55" width="14.9" height="14.9" rx="1.3" fill="none" stroke="#2058a5" stroke-width="1.15"/><path d="M6 5.3 L12.3 9 L6 12.7 Z" fill="#2058a5"/></svg>
<svg class="ico" style="left:2094.9px;top:16.8px" width="20.0" height="20.0" viewBox="0 0 20.0 20.0"><g transform="scale(1.0)"><path d="M9.4 1.9 L1.6 9.8 L10.4 18.3 L18.2 18.3 L18.2 11 Z" fill="none" stroke="#2058a5" stroke-width="1.250" stroke-linejoin="round"/><circle cx="15.1" cy="15.1" r="1.15" fill="#2058a5"/></g></svg>
<svg class="ico" style="left:2148.0px;top:23.6px" width="26" height="8" viewBox="0 0 26 8"><circle cx="4.75" cy="4" r="2.2" fill="none" stroke="#2058a5" stroke-width="1.25"/><circle cx="13" cy="4" r="2.2" fill="none" stroke="#2058a5" stroke-width="1.25"/><circle cx="21.25" cy="4" r="2.2" fill="none" stroke="#2058a5" stroke-width="1.25"/></svg>
<i class="hr" style="left:0.00px;top:54.50px;width:2243.30px;height:3.00px;background:linear-gradient(to bottom,#fdfdfd 0px 1px,#e3e3e3 1px 2px,#f8f8f8 2px 3px);"></i>
</div>
<div class="row" style="left:0.00px;top:691.03px;width:2243.30px;height:56.53px;">
<span id="t70" class="t lnk" style="left:52.00px;top:17.97px;color:#4a7fba;letter-spacing:-0.170px;">SF_COM_Annual_Compensation_Analysis_v1.0</span>
<svg class="ico" style="left:471.8px;top:15.2px" width="23" height="23" viewBox="0 0 23 23"><g fill="none" stroke="#5c5c5c" stroke-width="1.3" stroke-linecap="round" stroke-linejoin="round"><circle cx="7" cy="8.6" r="3.45"/><path d="M0.75 22 L0.75 19.6 C0.75 15.6 3.6 13.4 7 13.4 C10.4 13.4 13.3 15.6 13.3 19.6 L13.3 22 Z"/><circle cx="15.95" cy="3.85" r="2.7" stroke-width="1.2"/><path stroke-width="1.2" d="M12.8 8.9 C13.8 8.2 14.8 7.85 15.95 7.85 C19.2 7.85 21.7 10.3 21.7 13.4 L21.7 14.9 L15.6 14.9"/></g></svg>
<span id="t71" class="t" style="left:1013.30px;top:17.97px;color:#222;letter-spacing:-0.095px;">Jeevan Sigdel</span>
<span id="t72" class="t" style="left:1351.20px;top:17.97px;color:#222;">May 6, 2021, 4:17:56 PM</span>
<span id="t73" class="t" style="left:1689.60px;top:17.97px;color:#222;letter-spacing:-0.190px;">Story</span>
<svg class="ico" style="left:2041.8px;top:17.6px" width="18" height="18" viewBox="0 0 18 18"><rect x="1.55" y="1.55" width="14.9" height="14.9" rx="1.3" fill="none" stroke="#2058a5" stroke-width="1.15"/><path d="M6 5.3 L12.3 9 L6 12.7 Z" fill="#2058a5"/></svg>
<svg class="ico" style="left:2094.9px;top:16.8px" width="20.0" height="20.0" viewBox="0 0 20.0 20.0"><g transform="scale(1.0)"><path d="M9.4 1.9 L1.6 9.8 L10.4 18.3 L18.2 18.3 L18.2 11 Z" fill="none" stroke="#2058a5" stroke-width="1.250" stroke-linejoin="round"/><circle cx="15.1" cy="15.1" r="1.15" fill="#2058a5"/></g></svg>
<svg class="ico" style="left:2148.0px;top:23.6px" width="26" height="8" viewBox="0 0 26 8"><circle cx="4.75" cy="4" r="2.2" fill="none" stroke="#2058a5" stroke-width="1.25"/><circle cx="13" cy="4" r="2.2" fill="none" stroke="#2058a5" stroke-width="1.25"/><circle cx="21.25" cy="4" r="2.2" fill="none" stroke="#2058a5" stroke-width="1.25"/></svg>
<i class="hr" style="left:0.00px;top:54.97px;width:2243.30px;height:2.00px;background:linear-gradient(to bottom,#f1f1f1 0px 1px,#e8e8e8 1px 2px);"></i>
</div>
<div class="row" style="left:0.00px;top:747.56px;width:2243.30px;height:56.53px;">
<span id="t74" class="t lnk" style="left:52.00px;top:17.44px;color:#4a7fba;letter-spacing:-0.677px;">DASHBOARD</span>
<span id="t75" class="t" style="left:1013.30px;top:17.44px;color:#222;letter-spacing:-0.095px;">Jeevan Sigdel</span>
<span id="t76" class="t" style="left:1351.20px;top:17.44px;color:#222;">May 5, 2021, 8:41:26 PM</span>
<span id="t77" class="t" style="left:1689.60px;top:17.44px;color:#222;letter-spacing:-0.190px;">Story</span>
<svg class="ico" style="left:2041.8px;top:17.6px" width="18" height="18" viewBox="0 0 18 18"><rect x="1.55" y="1.55" width="14.9" height="14.9" rx="1.3" fill="none" stroke="#2058a5" stroke-width="1.15"/><path d="M6 5.3 L12.3 9 L6 12.7 Z" fill="#2058a5"/></svg>
<svg class="ico" style="left:2094.9px;top:16.8px" width="20.0" height="20.0" viewBox="0 0 20.0 20.0"><g transform="scale(1.0)"><path d="M9.4 1.9 L1.6 9.8 L10.4 18.3 L18.2 18.3 L18.2 11 Z" fill="none" stroke="#2058a5" stroke-width="1.250" stroke-linejoin="round"/><circle cx="15.1" cy="15.1" r="1.15" fill="#2058a5"/></g></svg>
<svg class="ico" style="left:2148.0px;top:23.6px" width="26" height="8" viewBox="0 0 26 8"><circle cx="4.75" cy="4" r="2.2" fill="none" stroke="#2058a5" stroke-width="1.25"/><circle cx="13" cy="4" r="2.2" fill="none" stroke="#2058a5" stroke-width="1.25"/><circle cx="21.25" cy="4" r="2.2" fill="none" stroke="#2058a5" stroke-width="1.25"/></svg>
<i class="hr" style="left:0.00px;top:55.44px;width:2243.30px;height:2.00px;background:linear-gradient(to bottom,#e4e4e4 0px 1px,#f5f5f5 1px 2px);"></i>
</div>
<div class="row" style="left:0.00px;top:804.09px;width:2243.30px;height:56.53px;">
<span id="t78" class="t lnk" style="left:52.00px;top:17.91px;color:#4a7fba;letter-spacing:-0.034px;">New Document2</span>
<span id="t79" class="t" style="left:1013.30px;top:17.91px;color:#222;letter-spacing:-0.095px;">Jeevan Sigdel</span>
<span id="t80" class="t" style="left:1351.20px;top:17.91px;color:#222;">May 5, 2021, 5:07:23 PM</span>
<span id="t81" class="t" style="left:1689.60px;top:17.91px;color:#222;letter-spacing:-0.190px;">Story</span>
<svg class="ico" style="left:2041.8px;top:17.6px" width="18" height="18" viewBox="0 0 18 18"><rect x="1.55" y="1.55" width="14.9" height="14.9" rx="1.3" fill="none" stroke="#2058a5" stroke-width="1.15"/><path d="M6 5.3 L12.3 9 L6 12.7 Z" fill="#2058a5"/></svg>
<svg class="ico" style="left:2094.9px;top:16.8px" width="20.0" height="20.0" viewBox="0 0 20.0 20.0"><g transform="scale(1.0)"><path d="M9.4 1.9 L1.6 9.8 L10.4 18.3 L18.2 18.3 L18.2 11 Z" fill="none" stroke="#2058a5" stroke-width="1.250" stroke-linejoin="round"/><circle cx="15.1" cy="15.1" r="1.15" fill="#2058a5"/></g></svg>
<svg class="ico" style="left:2148.0px;top:23.6px" width="26" height="8" viewBox="0 0 26 8"><circle cx="4.75" cy="4" r="2.2" fill="none" stroke="#2058a5" stroke-width="1.25"/><circle cx="13" cy="4" r="2.2" fill="none" stroke="#2058a5" stroke-width="1.25"/><circle cx="21.25" cy="4" r="2.2" fill="none" stroke="#2058a5" stroke-width="1.25"/></svg>
<i class="hr" style="left:0.00px;top:54.91px;width:2243.30px;height:2.00px;background:linear-gradient(to bottom,#f3f3f3 0px 1px,#e5e5e5 1px 2px);"></i>
</div>
<div class="row" style="left:0.00px;top:860.62px;width:2243.30px;height:56.53px;">
<span id="t82" class="t lnk" style="left:52.00px;top:17.38px;color:#4a7fba;letter-spacing:-0.240px;">SF_COM_Gender_Pay_Gap_Analysis_v1.0</span>
<svg class="ico" style="left:430.6px;top:15.2px" width="23" height="23" viewBox="0 0 23 23"><g fill="none" stroke="#5c5c5c" stroke-width="1.3" stroke-linecap="round" stroke-linejoin="round"><circle cx="7" cy="8.6" r="3.45"/><path d="M0.75 22 L0.75 19.6 C0.75 15.6 3.6 13.4 7 13.4 C10.4 13.4 13.3 15.6 13.3 19.6 L13.3 22 Z"/><circle cx="15.95" cy="3.85" r="2.7" stroke-width="1.2"/><path stroke-width="1.2" d="M12.8 8.9 C13.8 8.2 14.8 7.85 15.95 7.85 C19.2 7.85 21.7 10.3 21.7 13.4 L21.7 14.9 L15.6 14.9"/></g></svg>
<span id="t83" class="t" style="left:1013.30px;top:17.38px;color:#222;letter-spacing:-0.095px;">Jeevan Sigdel</span>
<span id="t84" class="t" style="left:1351.20px;top:17.38px;color:#222;">May 5, 2021, 2:14:32 PM</span>
<span id="t85" class="t" style="left:1689.60px;top:17.38px;color:#222;letter-spacing:-0.190px;">Story</span>
<svg class="ico" style="left:2041.8px;top:17.6px" width="18" height="18" viewBox="0 0 18 18"><rect x="1.55" y="1.55" width="14.9" height="14.9" rx="1.3" fill="none" stroke="#2058a5" stroke-width="1.15"/><path d="M6 5.3 L12.3 9 L6 12.7 Z" fill="#2058a5"/></svg>
<svg class="ico" style="left:2094.9px;top:16.8px" width="20.0" height="20.0" viewBox="0 0 20.0 20.0"><g transform="scale(1.0)"><path d="M9.4 1.9 L1.6 9.8 L10.4 18.3 L18.2 18.3 L18.2 11 Z" fill="none" stroke="#2058a5" stroke-width="1.250" stroke-linejoin="round"/><circle cx="15.1" cy="15.1" r="1.15" fill="#2058a5"/></g></svg>
<svg class="ico" style="left:2148.0px;top:23.6px" width="26" height="8" viewBox="0 0 26 8"><circle cx="4.75" cy="4" r="2.2" fill="none" stroke="#2058a5" stroke-width="1.25"/><circle cx="13" cy="4" r="2.2" fill="none" stroke="#2058a5" stroke-width="1.25"/><circle cx="21.25" cy="4" r="2.2" fill="none" stroke="#2058a5" stroke-width="1.25"/></svg>
<i class="hr" style="left:0.00px;top:55.38px;width:2243.30px;height:2.00px;background:linear-gradient(to bottom,#e7e7e7 0px 1px,#f2f2f2 1px 2px);"></i>
</div>
<div class="row" style="left:0.00px;top:917.15px;width:2243.30px;height:56.53px;">
<span id="t86" class="t lnk" style="left:52.00px;top:17.85px;color:#4a7fba;letter-spacing:-0.249px;">SF_EMP_Workforce_Analysis_v1.0</span>
<svg class="ico" style="left:360.4px;top:15.2px" width="23" height="23" viewBox="0 0 23 23"><g fill="none" stroke="#5c5c5c" stroke-width="1.3" stroke-linecap="round" stroke-linejoin="round"><circle cx="7" cy="8.6" r="3.45"/><path d="M0.75 22 L0.75 19.6 C0.75 15.6 3.6 13.4 7 13.4 C10.4 13.4 13.3 15.6 13.3 19.6 L13.3 22 Z"/><circle cx="15.95" cy="3.85" r="2.7" stroke-width="1.2"/><path stroke-width="1.2" d="M12.8 8.9 C13.8 8.2 14.8 7.85 15.95 7.85 C19.2 7.85 21.7 10.3 21.7 13.4 L21.7 14.9 L15.6 14.9"/></g></svg>
<span id="t87" class="t" style="left:1013.30px;top:17.85px;color:#222;letter-spacing:-0.095px;">Jeevan Sigdel</span>
<span id="t88" class="t" style="left:1351.20px;top:17.85px;color:#222;">May 5, 2021, 2:12:37 PM</span>
<span id="t89" class="t" style="left:1689.60px;top:17.85px;color:#222;letter-spacing:-0.190px;">Story</span>
<svg class="ico" style="left:2041.8px;top:17.6px" width="18" height="18" viewBox="0 0 18 18"><rect x="1.55" y="1.55" width="14.9" height="14.9" rx="1.3" fill="none" stroke="#2058a5" stroke-width="1.15"/><path d="M6 5.3 L12.3 9 L6 12.7 Z" fill="#2058a5"/></svg>
<svg class="ico" style="left:2094.9px;top:16.8px" width="20.0" height="20.0" viewBox="0 0 20.0 20.0"><g transform="scale(1.0)"><path d="M9.4 1.9 L1.6 9.8 L10.4 18.3 L18.2 18.3 L18.2 11 Z" fill="none" stroke="#2058a5" stroke-width="1.250" stroke-linejoin="round"/><circle cx="15.1" cy="15.1" r="1.15" fill="#2058a5"/></g></svg>
<svg class="ico" style="left:2148.0px;top:23.6px" width="26" height="8" viewBox="0 0 26 8"><circle cx="4.75" cy="4" r="2.2" fill="none" stroke="#2058a5" stroke-width="1.25"/><circle cx="13" cy="4" r="2.2" fill="none" stroke="#2058a5" stroke-width="1.25"/><circle cx="21.25" cy="4" r="2.2" fill="none" stroke="#2058a5" stroke-width="1.25"/></svg>
</div>
</div>
<i class="bottomline" style="left:0.00px;top:1246.00px;width:2253.00px;height:1.00px;"></i>
<i class="scroll" style="left:2243.30px;top:338.30px;width:12.00px;height:721.50px;"></i>
<aside class="support" style="left:2230.80px;top:559.00px;width:30.00px;height:119.80px;">
<span id="t90" class="t rot" style="left:34.94px;top:23.00px;font-weight:700;color:#fff;">Support</span>
</aside>
</body></html>
